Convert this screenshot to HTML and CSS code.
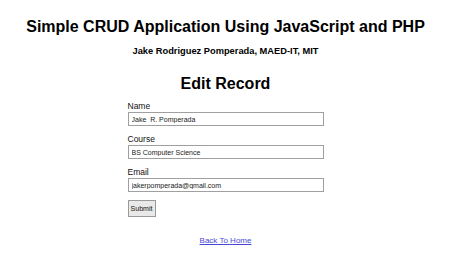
FILE: index.html
```html
<!DOCTYPE html>
<html lang="en">
<head>
  <meta charset="UTF-8">
  <meta name="viewport" content="width=device-width, initial-scale=1.0">
  <title>Simple CRUD Application - Edit Record</title>
  <link rel="stylesheet" href="styles.css">
</head>
<body>
  <div class="page">
    <h1>Simple CRUD Application Using JavaScript and PHP</h1>
    <h2 class="author">Jake Rodriguez Pomperada, MAED-IT, MIT</h2>
    <h3>Edit Record</h3>

    <form class="edit-form" action="#" method="post">
      <div class="field">
        <label for="name">Name</label>
        <input type="text" id="name" name="name" value="Jake  R. Pomperada">
      </div>
      <div class="field">
        <label for="course">Course</label>
        <input type="text" id="course" name="course" value="BS Computer Science">
      </div>
      <div class="field">
        <label for="email">Email</label>
        <input type="text" id="email" name="email" value="jakerpomperada@gmail.com">
      </div>
      <button type="submit" class="btn">Submit</button>
    </form>

    <p class="back"><a href="#">Back To Home</a></p>
  </div>
</body>
</html>
```

FILE: styles.css
```css
*{box-sizing: border-box;}
body{
  margin: 0;
  background: #fff;
  color: #000;
  font-family: "Liberation Sans", Arial, sans-serif;
}
.page{width: 451px; text-align: center;}
h1{
  margin: 17px 0 0;
  font-size: 16px; line-height: 20px;
}
.author{
  margin: 8px 0 0;
  font-size: 9.3px; line-height: 12px;
}
h3{
  margin: 17px 0 0;
  font-size: 16px; line-height: 20px;
}
/* form */
.edit-form{
  width: 196px; margin: 7px auto 0;
  text-align: left;
}
.field{margin-bottom: 8px;}
.field label{
  display: block;
  font-size: 8.5px; line-height: 11px;
  color: #111;
}
.field input{
  display: block;
  width: 100%; height: 14px;
  margin: 0; padding: 0 3px;
  border: 1px solid #a0a0a0;
  font-family: inherit; font-size: 7px; color: #222;
}
.btn{
  display: block;
  width: 28px; height: 17px;
  margin: 0; padding: 0;
  background: #e9e9e9;
  border: 1px solid #9a9a9a;
  font-family: inherit; font-size: 7px; color: #111;
}
.back{
  margin: 18px 0 0;
  font-size: 8px; line-height: 12px;
}
.back a{color: #4848d6;}
```
